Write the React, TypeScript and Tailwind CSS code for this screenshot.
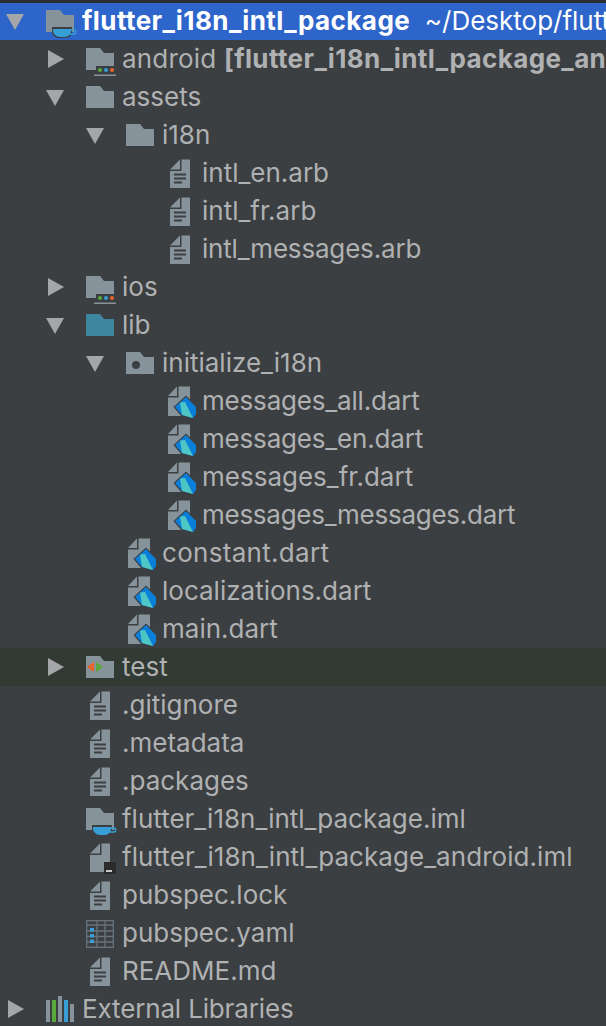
const FOLDER = "M0 8H14L18 13H28V30H0Z";

function Folder({ color = "#87939a" }: { color?: string }) {
  return <path d={FOLDER} fill={color} />;
}

function FileBody() {
  return <path d="M4 15.5L14 5.5V15.5ZM15.5 5.5H24V34H4V17H15.5Z" fill="#87939a" />;
}

function Slot({ children }: { children: React.ReactNode }) {
  return (
    <svg width="36" height="38" viewBox="0 0 36 38" className="block shrink-0">
      {children}
    </svg>
  );
}

function Cup() {
  return (
    <>
      <path d="M6 25H26V30C26 33 23 36 20 36H13C10 36 6 33 6 30Z" fill="#3c3f41" />
      <path d="M7 27H25V29C25 32 22 35 19 35H14C11 35 7 32 7 29Z" fill="#389fd6" />
      <path d="M25 28H28.5C30 28 30 32 28.5 32H23.5" fill="none" stroke="#389fd6" strokeWidth="1.6" />
    </>
  );
}

const dartFile = (
  <>
    <path d="M2 14L11 4.5V14ZM12.5 4.5H24V34H2V15.5H12.5Z" fill="#87939a" />
    <path d="M7.5 25L20 13.5L31.5 24.5V32.5L27.5 37.5L15.5 34.5Z" fill="#3c3f41" />
    <path d="M9 25L20 15L30 25V32L27 36L16 33Z" fill="#0a7fd9" />
    <path d="M14 20.5L19 20L27 36L16 33Z" fill="#4fc6c6" />
  </>
);

const icons: Record<string, React.ReactNode> = {
  module: (
    <Slot>
      <Folder />
      <Cup />
    </Slot>
  ),
  android: (
    <Slot>
      <Folder />
      <rect x="10" y="26" width="20" height="8" fill="#3c3f41" />
      <circle cx="14" cy="30" r="2" fill="#59a83a" />
      <circle cx="20" cy="30" r="2" fill="#389fd6" />
      <circle cx="26" cy="30" r="2" fill="#e8642a" />
      <rect x="8" y="34.5" width="22" height="1.5" fill="#87939a" />
    </Slot>
  ),
  folder: (
    <Slot>
      <Folder />
    </Slot>
  ),
  lib: (
    <Slot>
      <Folder color="#3e86a0" />
    </Slot>
  ),
  pkg: (
    <Slot>
      <Folder />
      <circle cx="10" cy="21" r="4" fill="#3c3f41" />
    </Slot>
  ),
  test: (
    <Slot>
      <Folder />
      <path d="M8 14V24L1 19Z" fill="#e8642a" />
      <path d="M10 14V24L17 19Z" fill="#59a83a" />
    </Slot>
  ),
  file: (
    <Slot>
      <FileBody />
      <rect x="8" y="19.5" width="12" height="2" fill="#3c3f41" />
      <rect x="8" y="23.5" width="12" height="2" fill="#3c3f41" />
      <rect x="8" y="27.5" width="8" height="2" fill="#3c3f41" />
    </Slot>
  ),
  dart: <Slot>{dartFile}</Slot>,
  iml: (
    <Slot>
      <FileBody />
      <rect x="18" y="24" width="12" height="12" fill="#2b2b2b" />
      <rect x="20" y="32" width="6" height="2" fill="#c8c8c8" />
    </Slot>
  ),
  yaml: (
    <Slot>
      <g fill="none" stroke="#657279" strokeWidth="1.4">
        <rect x="0.7" y="6.7" width="26.6" height="26.6" />
        <path d="M1 11H27M1 17H27M1 22.5H27M1 28H27M11 7V33M19 7V33" />
      </g>
      <rect x="4" y="14" width="4" height="3.5" fill="#389fd6" />
      <rect x="4" y="20" width="4" height="3.5" fill="#389fd6" />
      <rect x="4" y="25.5" width="4" height="3.5" fill="#389fd6" />
    </Slot>
  ),
  libs: (
    <Slot>
      <rect x="0" y="10" width="4" height="22" fill="#87939a" />
      <rect x="6" y="10" width="4" height="22" fill="#59a83a" />
      <rect x="12" y="6" width="4" height="26" fill="#87939a" />
      <rect x="18" y="10" width="4" height="22" fill="#389fd6" />
      <rect x="24" y="14" width="4" height="18" fill="#87939a" />
    </Slot>
  ),
};

function Arrow({ dir }: { dir?: "r" | "d" }) {
  return (
    <svg width="40" height="38" viewBox="0 0 40 38" className="block shrink-0">
      {dir === "r" && <path d="M2 10V28L18 19Z" fill="#a4a6a7" />}
      {dir === "d" && <path d="M0 12H18L9 28Z" fill="#a4a6a7" />}
    </svg>
  );
}

type RowProps = {
  depth: number;
  icon: string;
  dir?: "r" | "d";
  children: React.ReactNode;
  className?: string;
};

function Row({ depth, icon, dir, children, className = "" }: RowProps) {
  const pads = ["pl-[6px]", "pl-[46px]", "pl-[86px]", "pl-[126px]"];
  return (
    <div className={`flex h-[38px] items-center ${pads[depth]} ${className}`}>
      <Arrow dir={dir} />
      {icons[icon]}
      <span className="whitespace-pre">{children}</span>
    </div>
  );
}

export default function App() {
  return (
    <div className="h-[1026px] w-[606px] overflow-hidden bg-[#3c3f41] font-['Inter',sans-serif] text-[26px] leading-[38px] text-[#afb1b3]">
      <div className="h-[3px] bg-[#2c2e30]" />
      <div className="flex h-[37px] items-end overflow-hidden bg-[#2e65ca] pl-[6px] text-white">
        <Arrow dir="d" />
        {icons.module}
        <span className="whitespace-pre">
          <b className="font-bold tracking-[0.44px]">flutter_i18n_intl_package</b>
          {"  ~/Desktop/flutt"}
        </span>
      </div>
      <Row depth={1} icon="android" dir="r">
        <span className="tracking-[0.2px]">android </span>
        <b className="font-bold tracking-[0.4px]">[flutter_i18n_intl_package_an</b>
      </Row>
      <Row depth={1} icon="folder" dir="d">assets</Row>
      <Row depth={2} icon="folder" dir="d">i18n</Row>
      <Row depth={3} icon="file">intl_en.arb</Row>
      <Row depth={3} icon="file">intl_fr.arb</Row>
      <Row depth={3} icon="file" className="tracking-[-0.18px]">intl_messages.arb</Row>
      <Row depth={1} icon="android" dir="r">ios</Row>
      <Row depth={1} icon="lib" dir="d">lib</Row>
      <Row depth={2} icon="pkg" dir="d">initialize_i18n</Row>
      <Row depth={3} icon="dart" className="tracking-[-0.18px]">messages_all.dart</Row>
      <Row depth={3} icon="dart" className="tracking-[-0.18px]">messages_en.dart</Row>
      <Row depth={3} icon="dart">messages_fr.dart</Row>
      <Row depth={3} icon="dart" className="tracking-[-0.27px]">messages_messages.dart</Row>
      <Row depth={2} icon="dart" className="tracking-[0.3px]">constant.dart</Row>
      <Row depth={2} icon="dart">localizations.dart</Row>
      <Row depth={2} icon="dart">main.dart</Row>
      <Row depth={1} icon="test" dir="r" className="bg-[#313a33]">test</Row>
      <Row depth={1} icon="file">.gitignore</Row>
      <Row depth={1} icon="file">.metadata</Row>
      <Row depth={1} icon="file">.packages</Row>
      <Row depth={1} icon="module">flutter_i18n_intl_package.iml</Row>
      <Row depth={1} icon="iml" className="tracking-[0.05px]">flutter_i18n_intl_package_android.iml</Row>
      <Row depth={1} icon="file">pubspec.lock</Row>
      <Row depth={1} icon="yaml">pubspec.yaml</Row>
      <Row depth={1} icon="file">README.md</Row>
      <Row depth={0} icon="libs" dir="r" className="tracking-[-0.15px]">External Libraries</Row>
    </div>
  );
}
